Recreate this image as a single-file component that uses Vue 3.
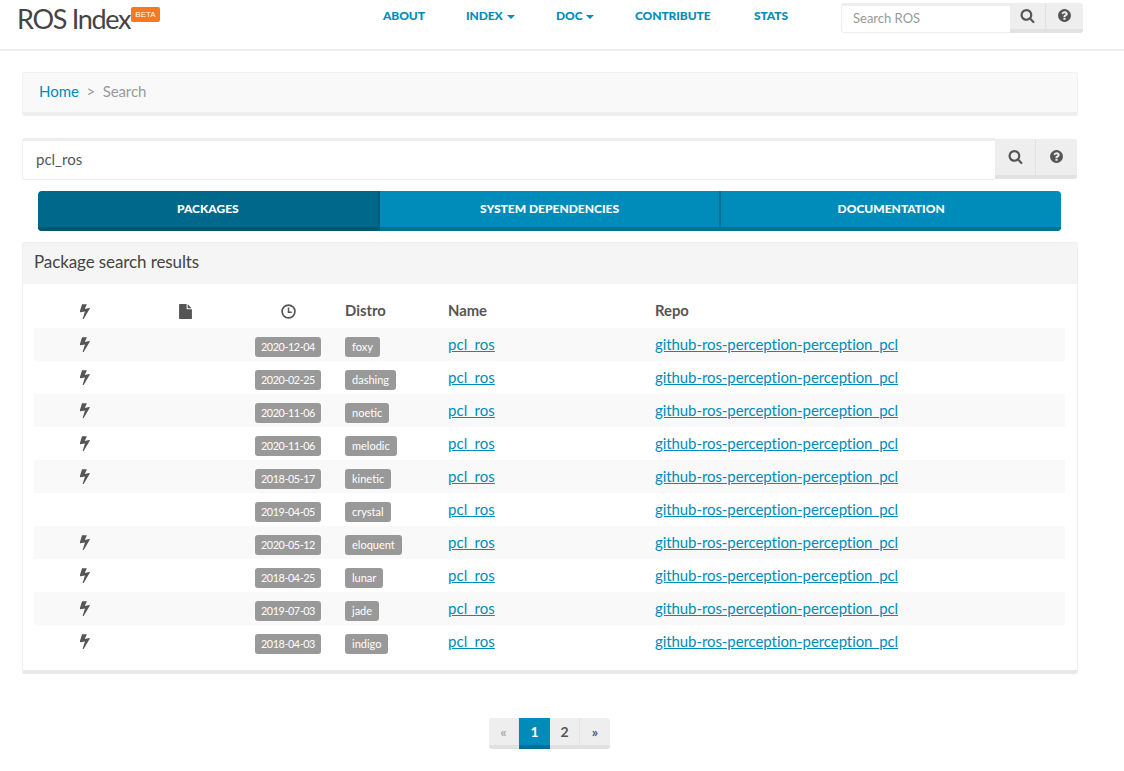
<script setup>
const rows = [
  { bolt: true, date: '2020-12-04', distro: 'foxy' },
  { bolt: true, date: '2020-02-25', distro: 'dashing' },
  { bolt: true, date: '2020-11-06', distro: 'noetic' },
  { bolt: true, date: '2020-11-06', distro: 'melodic' },
  { bolt: true, date: '2018-05-17', distro: 'kinetic' },
  { bolt: false, date: '2019-04-05', distro: 'crystal' },
  { bolt: true, date: '2020-05-12', distro: 'eloquent' },
  { bolt: true, date: '2018-04-25', distro: 'lunar' },
  { bolt: true, date: '2019-07-03', distro: 'jade' },
  { bolt: true, date: '2018-04-03', distro: 'indigo' }
]
const P = {
  bolt: 'M1333 566q18 20 7 44l-540 1157q-13 25-42 25-4 0-14-2-17-5-25.5-19t-4.5-30l197-808-406 101q-4 1-12 1-18 0-31-11-18-15-13-39l201-825q4-14 16-23t28-9h328q19 0 32 12.5t13 29.5q0 8-5 18l-171 463 396-98q8-2 12-2 19 0 34 15z',
  search: 'M1216 832q0-185-131.5-316.5t-316.5-131.5-316.5 131.5-131.5 316.5 131.5 316.5 316.5 131.5 316.5-131.5 131.5-316.5zm512 832q0 52-38 90t-90 38q-54 0-90-38l-343-342q-179 124-399 124-143 0-273.5-55.5t-225-150-150-225-55.5-273.5 55.5-273.5 150-225 225-150 273.5-55.5 273.5 55.5 225 150 150 225 55.5 273.5q0 220-124 399l343 343q37 37 37 90z',
  question: 'M1024 1376v-192q0-14-9-23t-23-9h-192q-14 0-23 9t-9 23v192q0 14 9 23t23 9h192q14 0 23-9t9-23zm256-672q0-88-55.5-163t-138.5-116-170-41q-243 0-371 213-15 24 8 42l132 100q7 6 19 6 16 0 25-12 53-68 86-92 34-24 86-24 48 0 85.5 26t37.5 59q0 38-20 61t-68 45q-63 28-115.5 86.5t-52.5 125.5v36q0 14 9 23t23 9h192q14 0 23-9t9-23q0-19 21.5-49.5t54.5-49.5q32-18 49-28.5t46-35 44.5-48 28-60.5 12.5-81zm384 192q0 209-103 385.5t-279.5 279.5-385.5 103-385.5-103-279.5-279.5-103-385.5 103-385.5 279.5-279.5 385.5-103 385.5 103 279.5 279.5 103 385.5z',
  file: 'M1152 512v-472q22 14 36 28l408 408q14 14 28 36h-472zm-128 32q0 40 28 68t68 28h544v1056q0 40-28 68t-68 28h-1344q-40 0-68-28t-28-68v-1600q0-40 28-68t68-28h800v544z'
}
</script>

<template>
  <div class="page">
    <header class="nav">
      <a class="brand">ROS Index<span class="beta">BETA</span></a>
      <nav class="menu">
        <a class="about">ABOUT</a>
        <a class="index">INDEX<i class="caret"></i></a>
        <a class="doc">DOC<i class="caret"></i></a>
        <a class="contrib">CONTRIBUTE</a>
        <a class="stats">STATS</a>
      </nav>
      <div class="navsearch">
        <input class="navinput" placeholder="Search ROS" />
        <button class="ibtn b1"><svg class="ic14" viewBox="0 0 1792 1792"><path :d="P.search" /></svg></button>
        <button class="ibtn b2"><svg class="ic14" viewBox="0 0 1792 1792"><path :d="P.question" /></svg></button>
      </div>
    </header>

    <main class="main">
      <div class="crumb"><a class="crumblink">Home</a><span class="sep">&gt;</span><span class="cur">Search</span></div>

      <div class="searchbar">
        <input class="biginput" value="pcl_ros" />
        <div class="bigbtns">
          <button class="bigbtn w1"><svg class="ic14" viewBox="0 0 1792 1792"><path :d="P.search" /></svg></button>
          <button class="bigbtn w2"><svg class="ic14" viewBox="0 0 1792 1792"><path :d="P.question" /></svg></button>
        </div>
      </div>

      <div class="tabs">
        <a class="tab active">PACKAGES</a>
        <a class="tab">SYSTEM DEPENDENCIES</a>
        <a class="tab">DOCUMENTATION</a>
      </div>

      <section class="panel">
        <h3 class="phead">Package search results</h3>
        <div class="pbody">
          <table class="results">
            <colgroup>
              <col class="c1" /><col class="c2" /><col class="c3" /><col class="c4" /><col class="c5" /><col class="c6" />
            </colgroup>
            <thead>
              <tr>
                <th class="ctr"><svg class="bolt" viewBox="480 100 870 1680" preserveAspectRatio="none"><path :d="P.bolt" /></svg></th>
                <th class="ctr"><svg class="file" viewBox="128 0 1536 1792"><path :d="P.file" /></svg></th>
                <th class="ctr">
                  <svg class="clock" viewBox="0 0 15 15">
                    <circle cx="7.5" cy="7.5" r="6.4" fill="none" stroke="#555" stroke-width="1.7" />
                    <path d="M7.5 3.6V8.2H10.8" fill="none" stroke="#555" stroke-width="1.5" />
                  </svg>
                </th>
                <th class="htext">Distro</th>
                <th class="htext">Name</th>
                <th class="htext">Repo</th>
              </tr>
            </thead>
            <tbody>
              <tr v-for="r in rows" :key="r.distro">
                <td class="ctr"><svg v-if="r.bolt" class="bolt row" viewBox="480 100 870 1680" preserveAspectRatio="none"><path :d="P.bolt" /></svg></td>
                <td></td>
                <td class="ctr"><span class="label date">{{ r.date }}</span></td>
                <td><span class="label">{{ r.distro }}</span></td>
                <td><a class="link name">pcl_ros</a></td>
                <td><a class="link repo">github-ros-perception-perception_pcl</a></td>
              </tr>
            </tbody>
          </table>
        </div>
      </section>

      <div class="pager">
        <a class="pg dim">«</a><a class="pg on">1</a><a class="pg num">2</a><a class="pg">»</a>
      </div>
    </main>
  </div>
</template>

<style>
html, body { margin: 0; background: #fff; }
</style>

<style scoped>
.page {
  width: 1124px;
  height: 771px;
  overflow: hidden;
  font-family: Lato, "Noto Sans", sans-serif;
  color: #555;
  font-size: 15px;
  box-sizing: border-box;
}
svg { fill: #555; display: inline-block; vertical-align: middle; }
.ic14 { width: 15px; height: 15px; }
.bolt { width: 10px; height: 15px; position: relative; top: -2px; }
.bolt.row { top: -2px; }
.file { width: 13px; height: 15px; position: relative; top: -2px; left: -2px; }
.clock { width: 15px; height: 15px; position: relative; top: -2px; }

.nav {
  height: 49px;
  border-bottom: 2px solid #eee;
  box-sizing: content-box;
  position: relative;
  display: flex;
}
.brand {
  position: absolute; left: 17px; top: 1px;
  font-size: 27px; line-height: 36px; letter-spacing: -1.3px; color: #444;
}
.beta {
  position: absolute; left: 114px; top: 6px;
  background: #f47920; color: #fff; font-size: 8px; line-height: 15px;
  border-radius: 2px; letter-spacing: 0;
  font-family: "Liberation Sans", sans-serif; width: 29px; text-align: center;
}
.menu a {
  position: absolute; top: 8px;
  font-size: 12px; line-height: 16px; font-weight: 900; color: #008cba; white-space: nowrap; letter-spacing: -0.1px;
}
.about { left: 383px; } .index { left: 466px; } .doc { left: 556px; } .contrib { left: 635px; } .stats { left: 754px; }
.caret {
  display: inline-block; border-left: 4px solid transparent; border-right: 4px solid transparent;
  border-top: 4px solid #008cba; margin-left: 4px; vertical-align: middle;
}
.navsearch {
  position: absolute; left: 841px; top: 3px; width: 242px; height: 30px; display: flex;
}
.navinput {
  width: 169px; height: 30px; box-sizing: border-box; border: 1px solid #eee; border-top-width: 3px; border-right: 0;
  padding: 0 11px 2px; font: 13px Lato, sans-serif; color: #555; outline: none; border-radius: 3px 0 0 3px;
}
.navinput::placeholder { color: #999; opacity: 1; }
.ibtn {
  height: 30px; border: 0; border-bottom: 4px solid #e2e2e2; background: #eee; padding: 0 0 1px; margin: 0;
  display: flex; align-items: center; justify-content: center; box-sizing: border-box;
}
.b1 { width: 36px; border-right: 1px solid #e2e2e2; }
.b2 { width: 37px; border-radius: 0 3px 3px 0; }

.main { padding: 21px 0 0 22px; width: 1056px; }
.crumb {
  height: 44px; box-sizing: border-box; background: #f9f9f9; border: 1px solid #f1f1f1; border-bottom: 4px solid #eee; border-radius: 3px;
  padding: 0 16px 4px; display: flex; align-items: center; font-size: 15px;
}
.crumblink { color: #008cba; }
.sep { color: #999; margin: 0 7.5px; }
.cur { color: #999; letter-spacing: -0.1px; }

.searchbar { margin-top: 22px; display: flex; height: 42px; }
.biginput {
  width: 973px; height: 42px; box-sizing: border-box; border: 1px solid #eee; border-top-width: 3px; border-right: 0;
  padding: 0 13px 2px; font: 15px Lato, sans-serif; color: #555; outline: none; border-radius: 3px 0 0 3px; background: #fff;
}
.bigbtns { display: flex; margin-top: 1px; height: 40px; }
.bigbtn {
  height: 40px; border: 0; border-bottom: 4px solid #e2e2e2; background: #eee; padding: 0 0 2px;
  display: flex; align-items: center; justify-content: center; box-sizing: border-box;
}
.w1 { width: 41px; border-right: 1px solid #e2e2e2; }
.w2 { width: 41px; border-radius: 0 3px 3px 0; }

.tabs {
  margin: 11px 0 0 16px; width: 1023px; height: 40px; display: flex; border-radius: 4px; overflow: hidden;
}
.tab {
  flex: 1; box-sizing: border-box; background: #008cba; border-bottom: 4px solid #007095; border-right: 2px solid #007095;
  color: #fff; font-weight: 900; font-size: 12px; padding-bottom: 1px; display: flex; align-items: center; justify-content: center;
}
.tab:last-child { border-right: 0; }
.tab.active { background: #00688b; border-bottom-color: #005570; border-right-color: #005a78; }

.panel {
  margin-top: 11px; height: 432px; box-sizing: border-box; border: 1px solid #eee; border-bottom: 4px solid #e8e8e8; border-radius: 3px;
}
.phead {
  margin: 0; height: 41px; background: #f5f5f5; padding: 0 11px; font-weight: 400; font-size: 17px; letter-spacing: -0.1px; line-height: 38px; color: #444;
}
.pbody { padding: 12px 11px 0; }
table.results { width: 1031px; border-collapse: collapse; table-layout: fixed; }
.c1 { width: 102px; } .c2 { width: 103px; } .c3 { width: 98px; } .c4 { width: 103px; } .c5 { width: 207px; } .c6 { width: 418px; }
th {
  height: 32px; padding: 0 8px; text-align: left; font-size: 14.8px; font-weight: 700; color: #555; box-sizing: border-box;
}
.htext { position: relative; top: -2px; }
td { height: 33px; padding: 0 8px; box-sizing: border-box; font-size: 15px; }
tbody tr:nth-child(odd) { background: #f9f9f9; }
.ctr { text-align: center; }
.label {
  display: inline-block; background: #999; color: #fff; font-size: 11px; line-height: 20px; padding: 0 7px; border-radius: 3px; vertical-align: middle; position: relative; top: 2px;
}
.label.date { font-size: 10.8px; letter-spacing: -0.42px; padding: 0 6.5px; }
.link { color: #008cba; text-decoration: underline; position: relative; top: -1px; }
.name { letter-spacing: 0.1px; }
.repo { letter-spacing: -0.08px; }

.pager { display: flex; margin: 44px 0 0 467px; }
.pg {
  width: 30px; height: 31px; box-sizing: border-box; background: #eee; border-bottom: 4px solid #e0e0e0; border-right: 1px solid #e4e4e4;
  display: flex; align-items: center; justify-content: center; font-size: 14px; font-weight: 700; color: #555;
}
.pg.dim { color: #aaa; border-radius: 3px 0 0 3px; }
.pg.on { width: 31px; background: #008cba; color: #fff; border-bottom-color: #007095; border-right: 0; }
.pg:last-child { border-right: 0; border-radius: 0 3px 3px 0; }
</style>
